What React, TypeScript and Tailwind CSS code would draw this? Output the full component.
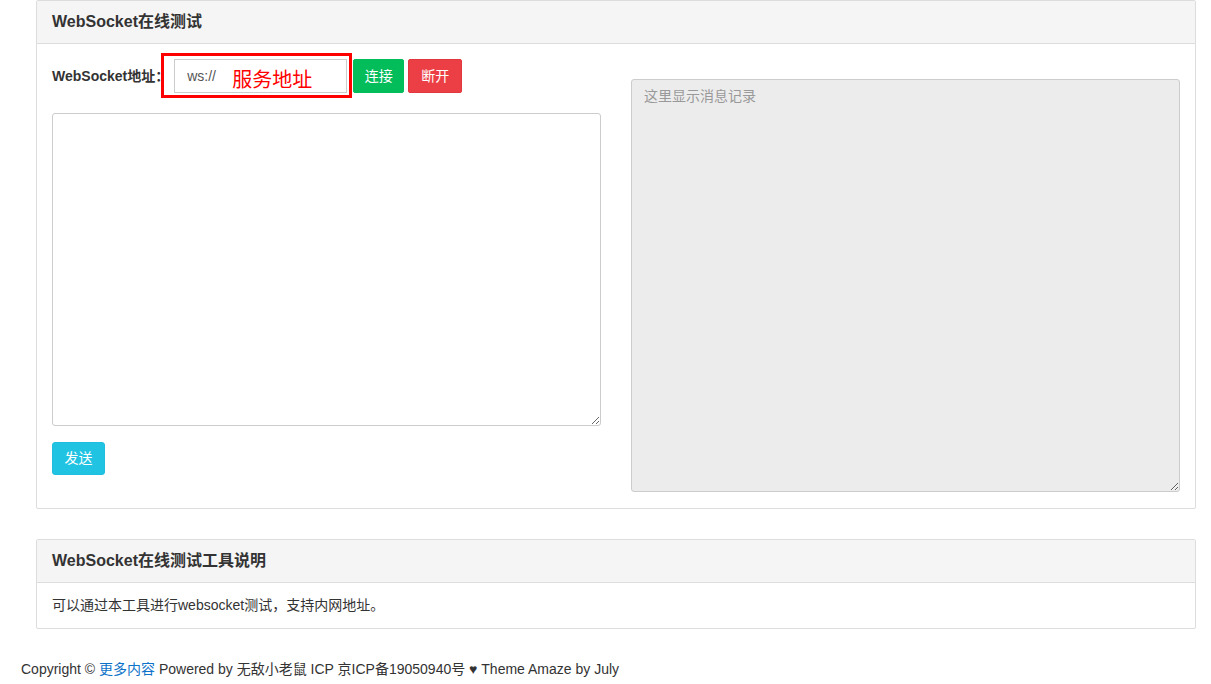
import React from "react";

const Panel = ({ title, children, bodyClass }: { title: string; children: React.ReactNode; bodyClass: string }) => (
  <div className="ml-[36px] mr-[15px] rounded-[2px] border border-[#dddddd] bg-white">
    <div className="border-b border-[#dddddd] bg-[#f5f5f5] px-[15px] py-[10px] text-[16px] font-bold leading-[22px] text-[#333333]">
      {title}
    </div>
    <div className={bodyClass}>{children}</div>
  </div>
);

export default function App() {
  return (
    <div className="min-h-[684px] bg-white font-[Liberation_Sans,Noto_Sans_CJK_SC,sans-serif] text-[14px] text-[#333333]">
      <Panel title="WebSocket在线测试" bodyClass="grid grid-cols-2 gap-[30px] px-[15px] pt-[15px] pb-[16px]">
        <div className="flex flex-col">
          <div className="flex items-center">
            <span className="text-[14px] font-bold">WebSocket地址：</span>
            <div className="relative ml-[5px]">
              <input
                className="h-[34px] w-[173px] border border-[#cccccc] bg-white px-[12px] text-[14px] text-[#555555] outline-none"
                defaultValue="ws://"
              />
              <div className="pointer-events-none absolute -left-[13px] -top-[6px] -right-[5px] -bottom-[5px] border-[3px] border-[#ff0000]"></div>
              <span className="pointer-events-none absolute left-[58px] top-[8px] text-[20px] leading-[26px] text-[#ff0000]">
                服务地址
              </span>
            </div>
            <button className="ml-[6px] h-[34px] w-[51px] rounded-[2px] border border-[#03bd5b] bg-[#03bd5b] text-[14px] text-white">
              连接
            </button>
            <button className="ml-[4px] h-[34px] w-[54px] rounded-[2px] border border-[#e0383e] bg-[#ec3f45] text-[14px] text-white">
              断开
            </button>
          </div>
          <textarea className="mt-[20px] h-[313px] w-full rounded-[3px] border border-[#cccccc] bg-white p-[8px] text-[14px] outline-none"></textarea>
          <div className="mt-[16px]">
            <button className="h-[33px] w-[53px] rounded-[3px] border border-[#1fbde0] bg-[#20c3e2] text-[14px] text-white">
              发送
            </button>
          </div>
        </div>
        <div>
          <textarea
            readOnly
            placeholder="这里显示消息记录"
            className="mt-[20px] block h-[413px] w-full rounded-[3px] border border-[#cccccc] bg-[#ececec] px-[12px] py-[6px] text-[14px] leading-[20px] text-[#555555] outline-none placeholder:text-[#999999]"
          ></textarea>
        </div>
      </Panel>
      <div className="h-[30px]"></div>
      <Panel title="WebSocket在线测试工具说明" bodyClass="px-[15px] py-[12px] leading-[21px]">
        可以通过本工具进行websocket测试，支持内网地址。
      </Panel>
      <div className="px-[21px] pt-[30px] leading-[20px] text-[#333333]">
        Copyright © <a className="text-[#0e73c8]" href="#">更多内容</a> Powered by 无敌小老鼠 ICP 京ICP备19050940号 ♥ Theme Amaze by July
      </div>
    </div>
  );
}
